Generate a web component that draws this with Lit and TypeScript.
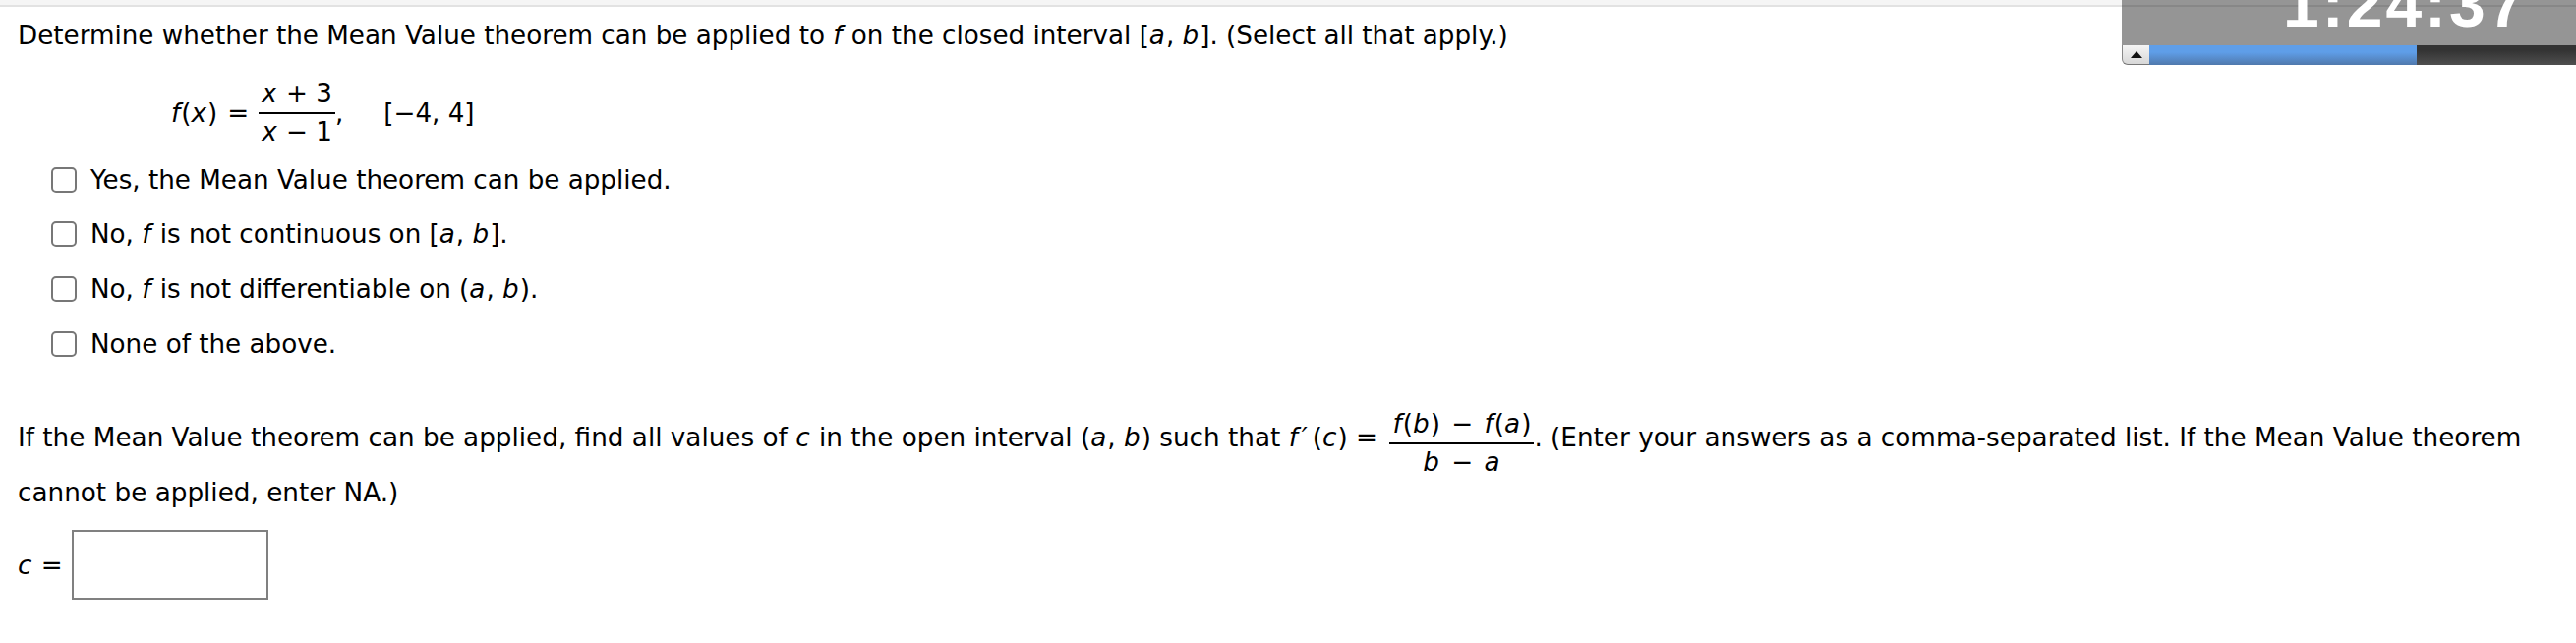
import { LitElement, html, css } from "lit";
import { customElement } from "lit/decorators.js";

@customElement("app-root")
export class AppRoot extends LitElement {
  static styles = css`
    :host { display: block; width: 2620px; height: 654px; position: relative; overflow: hidden; background: #fff; color: #000;
      font-family: "DejaVu Sans", Verdana, sans-serif; font-size: 26.2px; line-height: 56px; }
    i { font-style: italic; padding-right: 1px; }
    .prime { letter-spacing: 4px; }
    .topline { height: 2px; border-top: 5px solid #f5f5f5; background: #e2e2e2; }
    .page { padding: 0 18px; }
    .q { height: 56px; margin-top: 1px; }
    .formula { display: flex; align-items: center; height: 78px; margin-top: 12px; padding-left: 156px; line-height: 38px; }
    .frac { display: inline-flex; flex-direction: column; align-items: center; vertical-align: middle; line-height: 37px; }
    .frac .n { border-bottom: 2px solid #000; padding: 0 3px; align-self: stretch; text-align: center; }
    .wide { word-spacing: 3px; }
    .eq { margin: 0 10px; }
    .iv { margin-left: 41px; }
    .opts { margin-left: 34px; margin-top: 1px; }
    .opt { display: flex; align-items: center; height: 55.6px; gap: 14px; }
    .box { width: 26px; height: 26px; box-sizing: border-box; border: 2px solid #777; border-radius: 5px; background: #fff; }
    .para { margin-top: 40px; line-height: 56px; white-space: nowrap; font-size: 26.25px; }
    .para .frac { margin: -8px 0 -16px 4px; }
    .answer { display: flex; align-items: center; gap: 9px; margin-top: 10px; }
    .input { width: 200px; height: 71px; box-sizing: border-box; border: 2px solid #808080; background: #fff; }
    .timer { position: absolute; top: 0; right: 0; width: 462px; height: 66px; }
    .panel { height: 46px; background: #959595; position: relative; overflow: hidden; }
    .panel .rule { position: absolute; left: 0; right: 0; top: 5px; height: 2px; background: #878787; }
    .time { position: absolute; left: 164px; top: -29px; font: bold 66px/66px "Liberation Sans", Arial, sans-serif; color: #fff; letter-spacing: 3px; white-space: nowrap; }
    .bar { display: flex; height: 20px; }
    .btn { width: 28px; background: linear-gradient(#f4f4f4, #d8d8d8); border-radius: 0 0 0 6px; border-left: 1px solid #888; border-bottom: 1px solid #777; box-sizing: border-box; display: flex; align-items: center; justify-content: center; }
    .blue { width: 272px; background: linear-gradient(#5f9ee8 35%, #5079ad); }
    .dark { flex: 1; background: linear-gradient(#333 25%, #4f4f4f); }
  `;

  render() {
    return html`
      <div class="topline"></div>
      <div class="page">
        <div class="q">Determine whether the Mean Value theorem can be applied to <i>f</i> on the closed interval [<i>a</i>, <i>b</i>]. (Select all that apply.)</div>
        <div class="formula">
          <span><i>f</i>(<i>x</i>)</span><span class="eq">=</span>
          <span class="frac"><span class="n"><i>x</i> + 3</span><span><i>x</i> − 1</span></span><span>,</span>
          <span class="iv">[−4, 4]</span>
        </div>
        <div class="opts">
          <div class="opt"><span class="box"></span><span>Yes, the Mean Value theorem can be applied.</span></div>
          <div class="opt"><span class="box"></span><span>No, <i>f</i> is not continuous on [<i>a</i>, <i>b</i>].</span></div>
          <div class="opt"><span class="box"></span><span>No, <i>f</i> is not differentiable on (<i>a</i>, <i>b</i>).</span></div>
          <div class="opt"><span class="box"></span><span>None of the above.</span></div>
        </div>
        <div class="para">If the Mean Value theorem can be applied, find all values of <i>c</i> in the open interval (<i>a</i>, <i>b</i>) such that <i class="prime">f′</i>(<i>c</i>) = <span class="frac wide"><span class="n"><i>f</i>(<i>b</i>) − <i>f</i>(<i>a</i>)</span><span><i>b</i> − <i>a</i></span></span>. (Enter your answers as a comma-separated list. If the Mean Value theorem<br />cannot be applied, enter NA.)</div>
        <div class="answer"><span><i>c</i> =</span><span class="input"></span></div>
      </div>
      <div class="timer">
        <div class="panel"><div class="rule"></div><div class="time">1:24:37</div></div>
        <div class="bar">
          <div class="btn"><svg width="12" height="7" viewBox="0 0 12 7"><path d="M6 0 L12 7 L0 7 Z" fill="#111"/></svg></div>
          <div class="blue"></div><div class="dark"></div>
        </div>
      </div>
    `;
  }
}
